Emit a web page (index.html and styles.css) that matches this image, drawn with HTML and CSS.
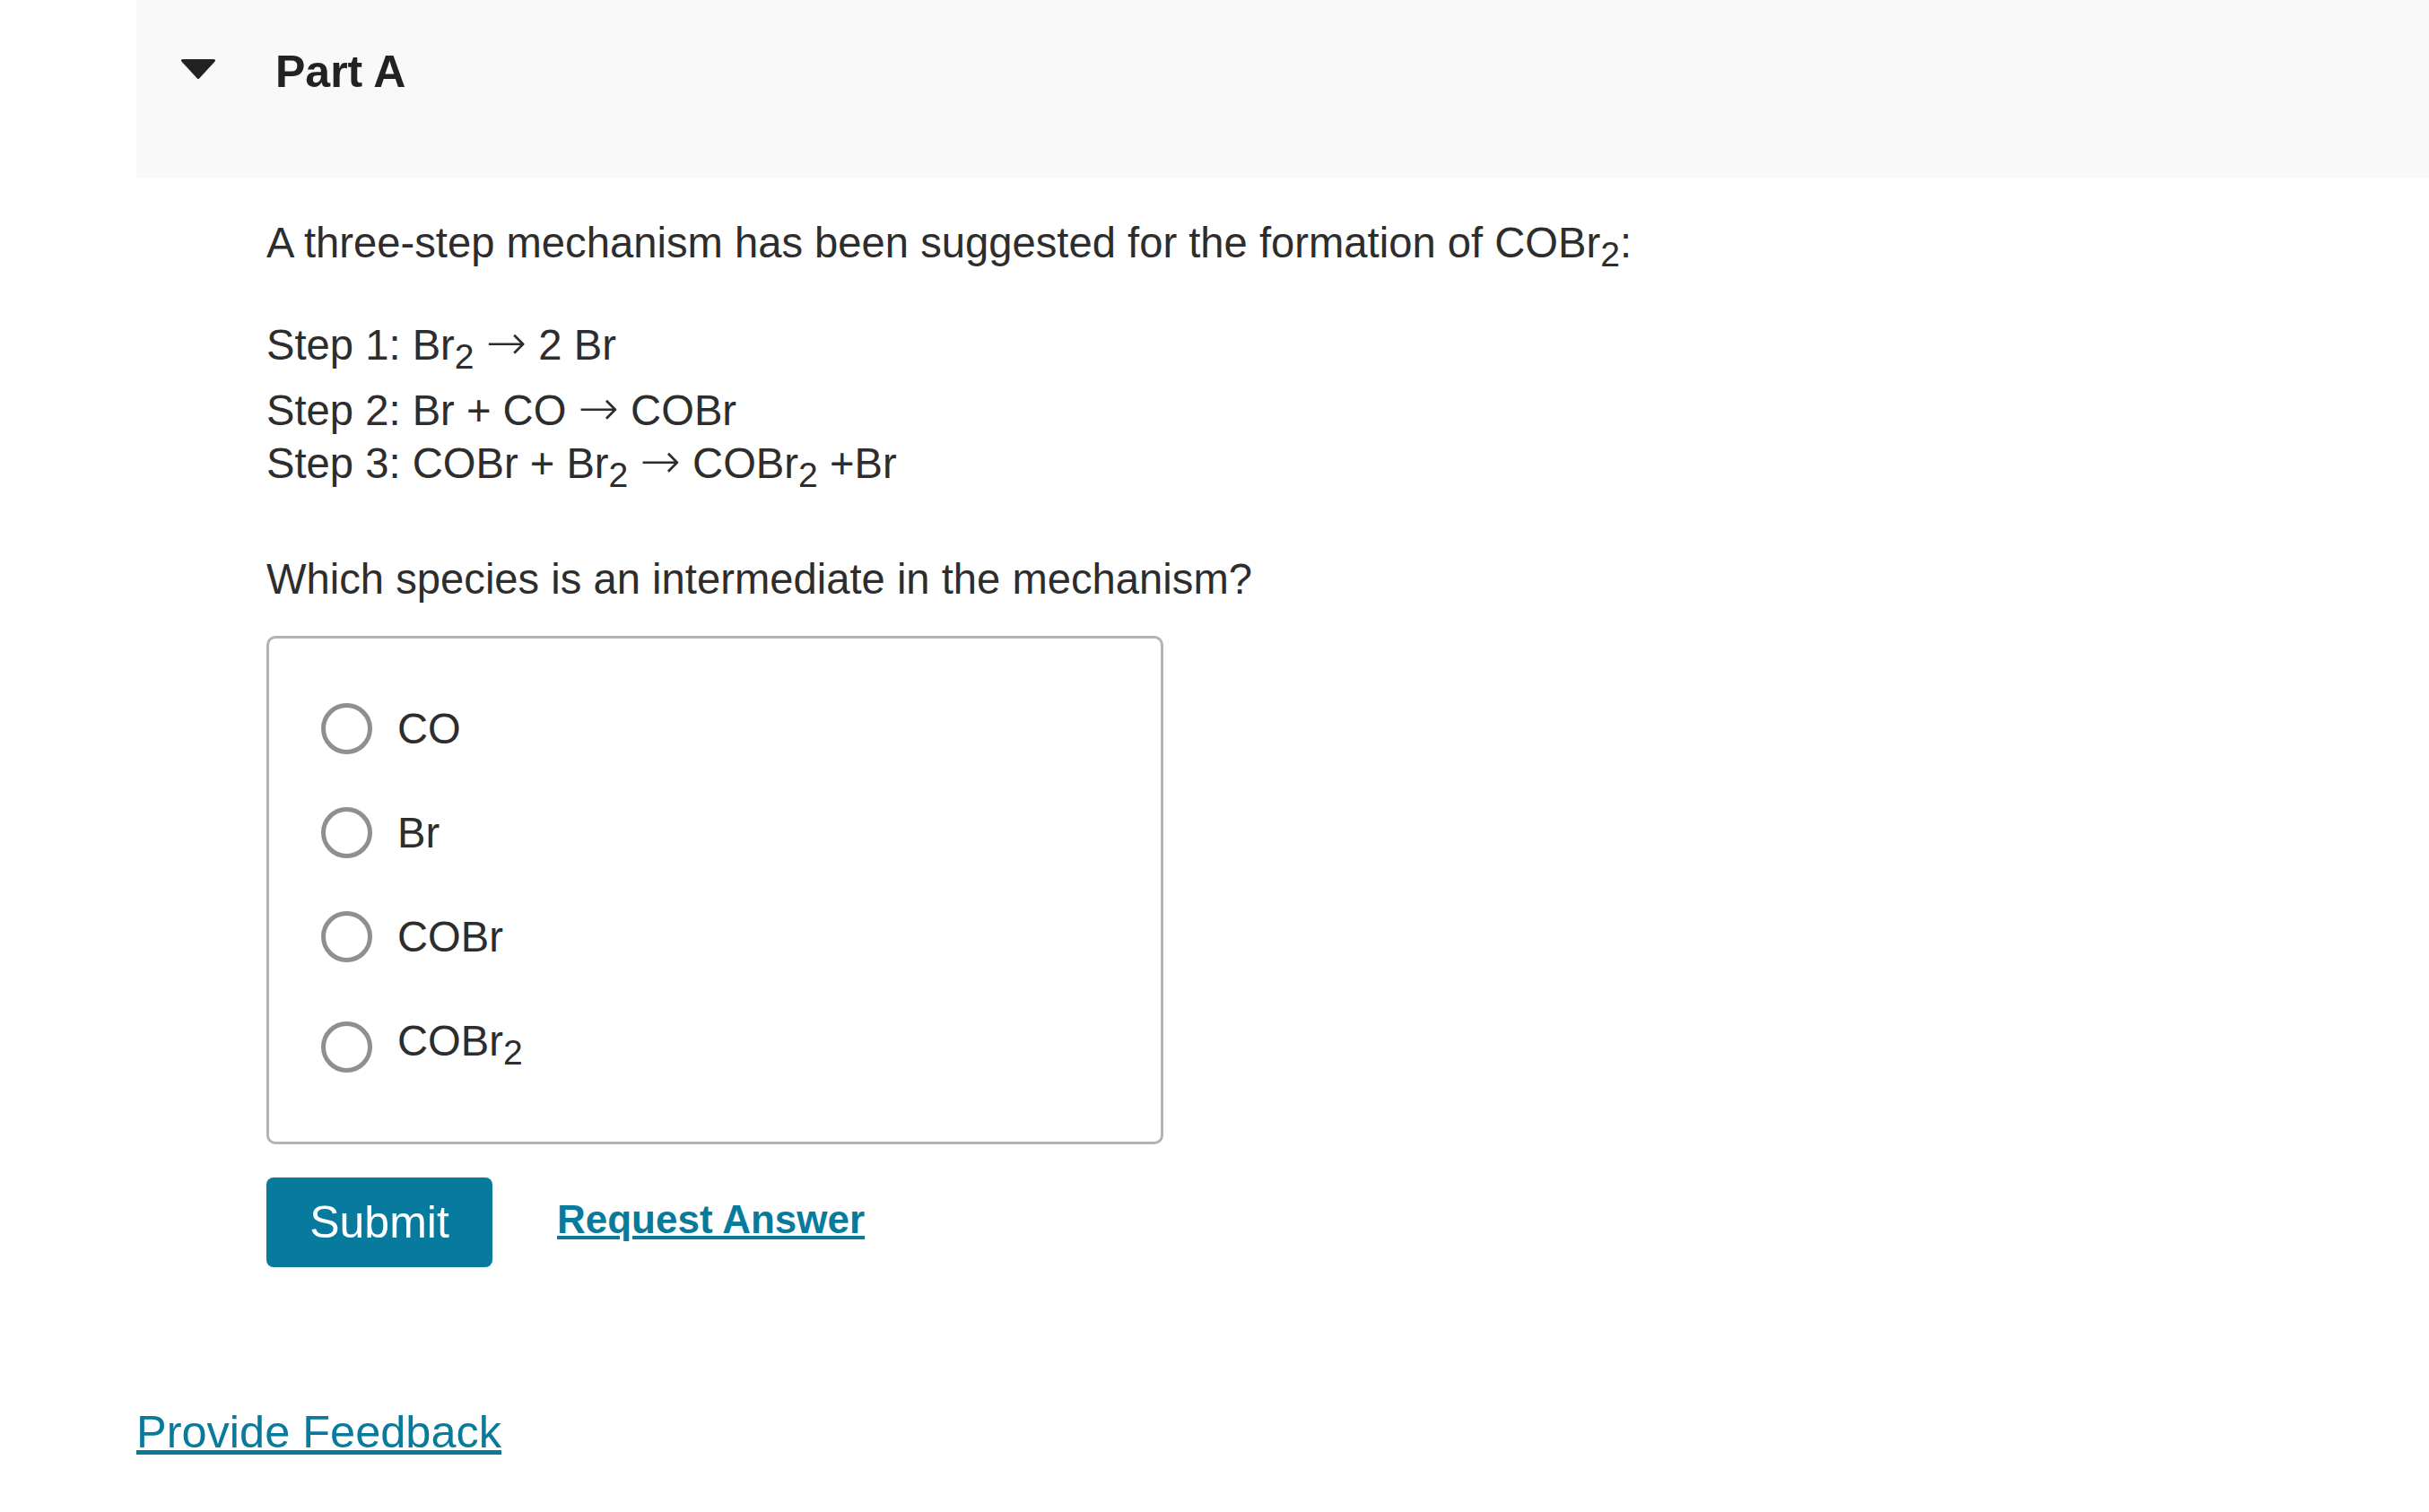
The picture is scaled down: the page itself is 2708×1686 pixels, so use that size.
FILE: index.html
```html
<!DOCTYPE html>
<html lang="en">
<head>
<meta charset="utf-8">
<title>Part A</title>
<link rel="stylesheet" href="styles.css">
</head>
<body>
<div class="page">
  <section class="part">
    <header class="part-head">
      <svg class="caret" width="38" height="22" viewBox="0 0 38 22" aria-hidden="true">
        <polygon points="1.5,1.5 36.5,1.5 19,20.5" fill="#222" stroke="#222" stroke-width="3" stroke-linejoin="round"/>
      </svg>
      <h2 class="part-title">Part A</h2>
    </header>
    <div class="part-body">
      <p class="intro">A three-step mechanism has been suggested for the formation of COBr<sub>2</sub>:</p>
      <div class="steps">
        <div class="step">Step 1: Br<sub>2</sub> <span class="arrow">&#8594;</span> 2 Br</div>
        <div class="step">Step 2: Br + CO <span class="arrow">&#8594;</span> COBr</div>
        <div class="step">Step 3: COBr + Br<sub>2</sub> <span class="arrow">&#8594;</span> COBr<sub>2</sub> +Br</div>
      </div>
      <p class="question">Which species is an intermediate in the mechanism?</p>
      <div class="choices">
        <div class="choice"><span class="radio"></span><span class="choice-label">CO</span></div>
        <div class="choice"><span class="radio"></span><span class="choice-label">Br</span></div>
        <div class="choice"><span class="radio"></span><span class="choice-label">COBr</span></div>
        <div class="choice"><span class="radio"></span><span class="choice-label">COBr<sub>2</sub></span></div>
      </div>
      <div class="actions">
        <button class="submit" type="button">Submit</button>
        <a class="request" href="#">Request Answer</a>
      </div>
    </div>
  </section>
  <div class="feedback-row">
    <a class="feedback" href="#">Provide Feedback</a>
  </div>
</div>
</body>
</html>
```

FILE: styles.css
```css
html, body {
  margin: 0;
  padding: 0;
  background: #ffffff;
}

body {
  font-family: "Liberation Sans", Arial, Helvetica, sans-serif;
  color: #2d2d2d;
}

.page {
  margin-left: 152px;
}

.part-head {
  display: flex;
  align-items: flex-start;
  background: #f9f9f9;
  height: 199px;
  box-sizing: border-box;
  padding: 51px 0 0 50px;
}

.caret {
  flex: none;
  margin-top: 15px;
  display: block;
}

.part-title {
  margin: 0 0 0 67px;
  font-size: 50px;
  font-weight: bold;
  line-height: normal;
  color: #222222;
}

.part-body {
  padding-left: 145px;
  font-size: 47.2px;
  line-height: 59px;
}

sub {
  font-size: 0.83em;
  vertical-align: sub;
  line-height: inherit;
}

.arrow {
  font-family: "DejaVu Sans", sans-serif;
  font-weight: 200;
  font-size: 1.15em;
  line-height: 0;
}

.intro {
  margin: 42px 0 0 0;
}

.steps {
  margin-top: 42px;
}

.question {
  margin: 57px 0 0 0;
}

.choices {
  margin-top: 34px;
  width: 1000px;
  box-sizing: border-box;
  border: 3px solid #b3b3b3;
  border-radius: 10px;
  padding: 71px 0 69px 58px;
  display: flex;
  flex-direction: column;
  gap: 57px;
}

.choice {
  display: flex;
  align-items: center;
  gap: 28px;
}

.radio {
  flex: none;
  width: 57px;
  height: 57px;
  box-sizing: border-box;
  border: 5px solid #8e8e93;
  border-radius: 50%;
  background: #ffffff;
}

.choice-label {
  display: block;
  color: #2d2d2d;
}

.actions {
  display: flex;
  align-items: center;
  gap: 72px;
  margin-top: 37px;
}

.submit {
  width: 252px;
  height: 100px;
  padding: 0;
  border: none;
  border-radius: 8px;
  background: #077a9d;
  color: #ffffff;
  font-family: "Liberation Sans", Arial, Helvetica, sans-serif;
  font-size: 50px;
  line-height: 1;
}

.request {
  font-size: 44px;
  font-weight: bold;
  line-height: normal;
  color: #087a9c;
  text-decoration: underline;
  margin-bottom: 5px;
}

.feedback-row {
  margin-top: 154px;
  font-size: 50.5px;
  line-height: normal;
}

.feedback {
  color: #087a9c;
  text-decoration: underline;
}
```
